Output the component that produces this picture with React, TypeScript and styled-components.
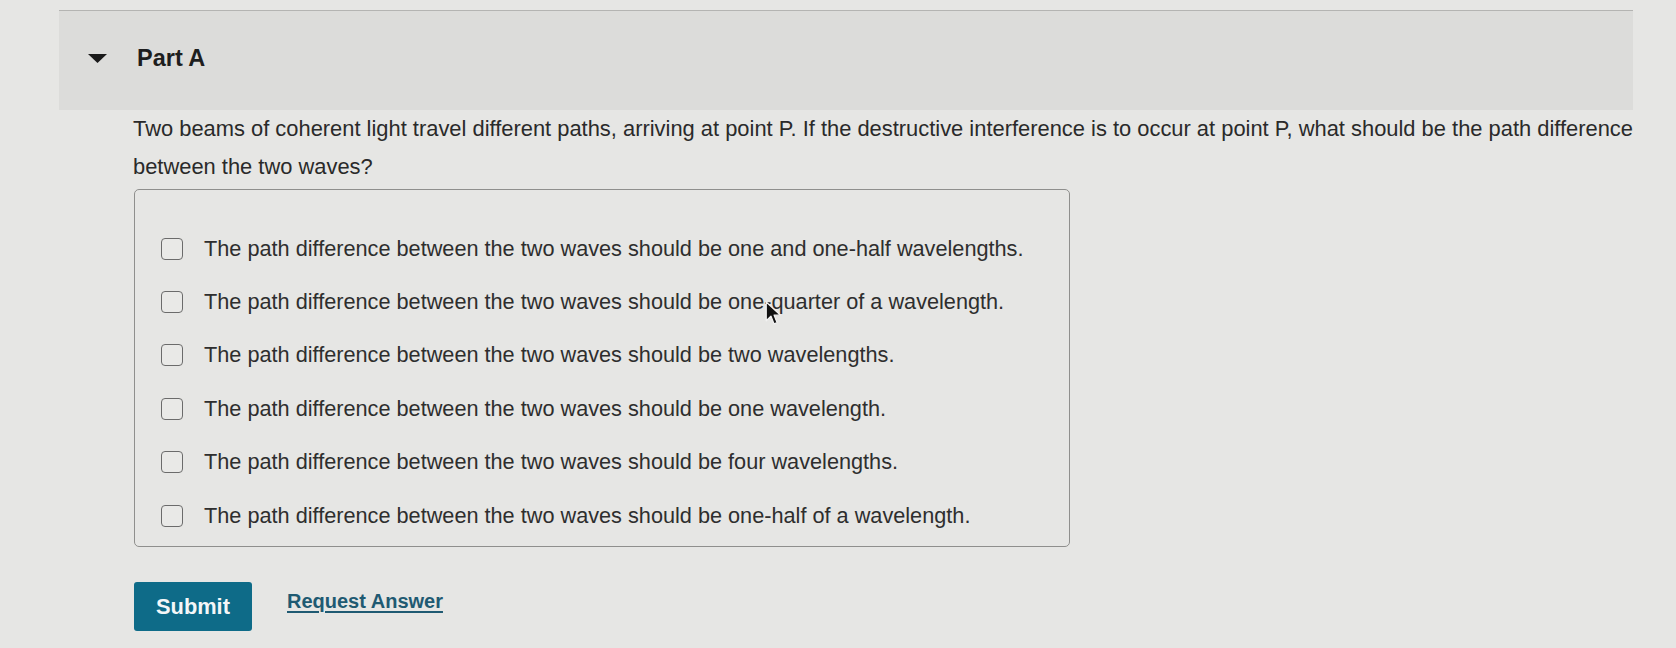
import React from "react";
import styled, { createGlobalStyle } from "styled-components";

const Global = createGlobalStyle`
  html, body {
    margin: 0;
    padding: 0;
    background: #e6e6e4;
  }
  body {
    font-family: "Liberation Sans", Arial, Helvetica, sans-serif;
    color: #2b2b2b;
  }
`;

const Page = styled.div`
  position: relative;
  width: 1676px;
  height: 648px;
  overflow: hidden;
  padding-top: 10px;
  box-sizing: border-box;
`;

const HeaderBand = styled.div`
  margin-left: 59px;
  width: 1574px;
  height: 100px;
  box-sizing: border-box;
  border-top: 1px solid #b4b4b2;
  background: #dcdcda;
  display: flex;
  align-items: center;
  padding-left: 29px;
  padding-bottom: 4px;
`;

const Caret = styled.svg`
  width: 19px;
  height: 9px;
  flex: none;
`;

const PartTitle = styled.h2`
  margin: 0 0 0 30px;
  font-size: 23.5px;
  font-weight: 700;
  color: #1e1e1e;
`;

const Body = styled.div`
  padding-left: 133px;
`;

const Question = styled.p`
  margin: 0;
  width: 1500px;
  font-size: 21.9px;
  line-height: 38px;
  color: #2a2a2a;
`;

const OptionsBox = styled.div`
  margin-top: 3px;
  margin-left: 1px;
  width: 936px;
  box-sizing: border-box;
  border: 1px solid #8f8f8d;
  border-radius: 5px;
  padding: 32px 0 4px 26px;
  display: flex;
  flex-direction: column;
`;

const OptionRow = styled.label`
  display: flex;
  align-items: center;
  height: 53.4px;
  gap: 21px;
  font-size: 21.7px;
  color: #2e2e2e;
  cursor: pointer;
`;

const Check = styled.span`
  width: 22px;
  height: 22px;
  flex: none;
  box-sizing: border-box;
  border: 1.6px solid #6b6b6b;
  border-radius: 4px;
  background: #e9e9e7;
`;

const Actions = styled.div`
  margin-top: 35px;
  margin-left: 1px;
  display: flex;
  align-items: center;
  gap: 35px;
`;

const SubmitButton = styled.button`
  width: 118px;
  height: 49px;
  border: none;
  border-radius: 3px;
  background: #0e6b88;
  color: #f4f7f8;
  font-family: "Liberation Sans", Arial, sans-serif;
  font-size: 21.8px;
  font-weight: 700;
  padding: 0;
  cursor: pointer;
`;

const RequestLink = styled.a`
  font-size: 20px;
  font-weight: 700;
  color: #1f5a72;
  text-decoration: underline;
  text-underline-offset: 3px;
  margin-top: -11px;
  cursor: pointer;
`;

const Cursor = styled.svg`
  position: absolute;
  left: 765px;
  top: 301px;
  width: 16px;
  height: 25px;
`;

const options = [
  "The path difference between the two waves should be one and one-half wavelengths.",
  "The path difference between the two waves should be one-quarter of a wavelength.",
  "The path difference between the two waves should be two wavelengths.",
  "The path difference between the two waves should be one wavelength.",
  "The path difference between the two waves should be four wavelengths.",
  "The path difference between the two waves should be one-half of a wavelength.",
];

export default function App() {
  return (
    <>
      <Global />
      <Page>
        <HeaderBand>
          <Caret viewBox="0 0 19 9">
            <polygon points="0,0 19,0 9.5,9" fill="#1a1a1a" />
          </Caret>
          <PartTitle>Part A</PartTitle>
        </HeaderBand>
        <Body>
          <Question>
            Two beams of coherent light travel different paths, arriving at point P. If the destructive
            interference is to occur at point P, what should be the path difference between the two waves?
          </Question>
          <OptionsBox>
            {options.map((o) => (
              <OptionRow key={o}>
                <Check />
                <span>{o}</span>
              </OptionRow>
            ))}
          </OptionsBox>
          <Actions>
            <SubmitButton>Submit</SubmitButton>
            <RequestLink>Request Answer</RequestLink>
          </Actions>
        </Body>
        <Cursor viewBox="0 0 15 24">
          <path
            d="M1 1 L1 19 L5.5 14.5 L8.5 22 L11.5 20.8 L8.6 13.6 L14.5 13.6 Z"
            fill="#111"
            stroke="#f2f2f2"
            strokeWidth="1.2"
            strokeLinejoin="round"
          />
        </Cursor>
      </Page>
    </>
  );
}
